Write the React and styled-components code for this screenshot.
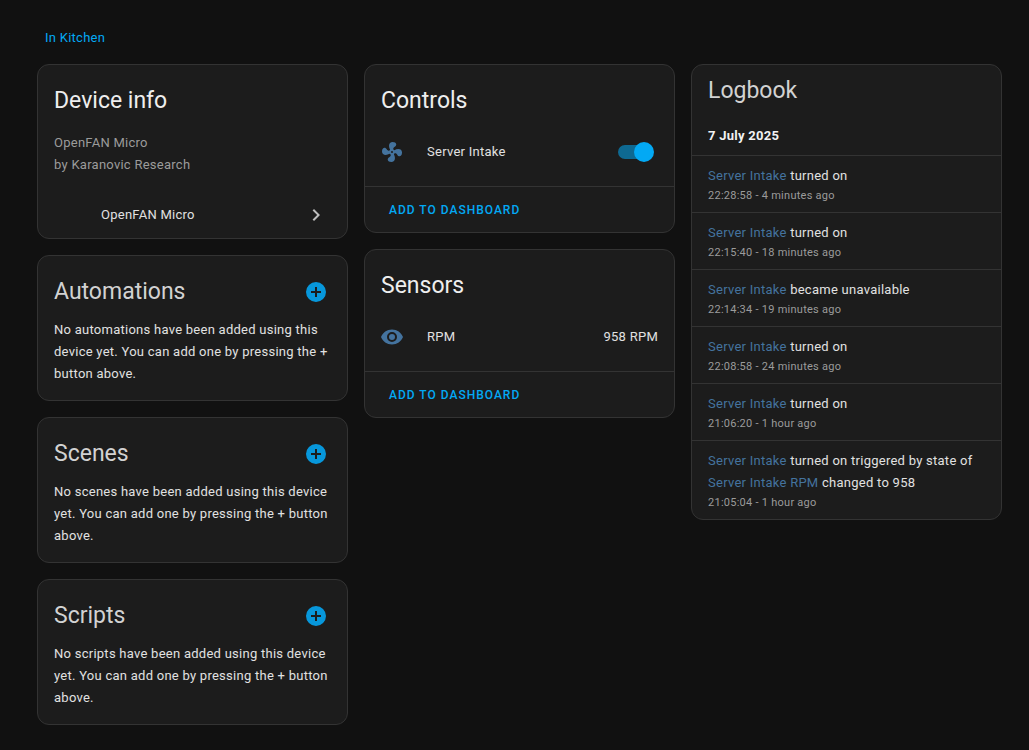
import React, { useState } from "react";
import styled, { createGlobalStyle } from "styled-components";

const GlobalStyle = createGlobalStyle`
  *, *::before, *::after { box-sizing: border-box; }
  body {
    margin: 0;
    background: #111111;
    color: #e1e1e1;
    font-family: Roboto, "Noto Sans", sans-serif;
    font-size: 13px;
    line-height: 22px;
    letter-spacing: 0.02em;
  }
`;

const Page = styled.main`
  padding: 27px 27px 24px 37px;
`;

const AreaLink = styled.a`
  display: block;
  width: fit-content;
  margin: 0 0 15px 8px;
  color: #03a9f4;
  text-decoration: none;
`;

const Columns = styled.div`
  display: grid;
  grid-template-columns: repeat(3, minmax(0, 1fr));
  align-items: start;
  gap: 16px;
`;

const Column = styled.div`
  display: flex;
  flex-direction: column;
  gap: 16px;
`;

const Card = styled.section`
  background: #1c1c1c;
  border: 1px solid #333333;
  border-radius: 12px;
  overflow: hidden;
`;

const CardHeader = styled.header`
  display: flex;
  align-items: center;
  justify-content: space-between;
  padding: ${(p) => (p.$compact ? "2px" : "12px")} 16px 0;
`;

const Title = styled.h1`
  margin: 0;
  font-size: 23px;
  font-weight: 400;
  line-height: 48px;
  letter-spacing: 0;
  color: ${(p) => (p.$soft ? "#d2d2d2" : "#eeeeee")};
`;

const AddButton = styled.button`
  display: flex;
  margin-right: 3px;
  padding: 0;
  border: 0;
  background: none;
  color: #0797db;
  cursor: pointer;
`;

const EmptyText = styled.p`
  margin: 0;
  padding: 3px 16px 15px;
`;

const DeviceMeta = styled.div`
  padding: 7px 16px 16px;
  color: #9b9b9b;
`;

const DeviceLink = styled.a`
  display: flex;
  align-items: center;
  justify-content: space-between;
  height: 46px;
  padding: 0 19px 0 63px;
  color: #e1e1e1;
  text-decoration: none;

  svg { color: #bdbdbd; }
`;

const EntityRow = styled.div`
  display: flex;
  align-items: center;
  height: 42px;
  margin: 6px 16px 13px;
`;

const EntityIcon = styled.span`
  display: flex;
  width: 47px;
  margin-left: -1px;
  color: #44739e;
`;

const EntityName = styled.label`
  flex: 1;
`;

const CardActions = styled.footer`
  display: flex;
  align-items: center;
  height: 46px;
  padding: 0 16px;
  border-top: 1px solid #333333;
`;

const TextButton = styled.button`
  padding: 0 8px;
  border: 0;
  background: none;
  color: #03a9f4;
  font: 500 12px/32px Roboto, sans-serif;
  letter-spacing: 1px;
  text-transform: uppercase;
  cursor: pointer;
`;

const Switch = styled.input`
  appearance: none;
  position: relative;
  width: 36px;
  height: 20px;
  margin: 0 4px 0 0;
  cursor: pointer;

  &::before {
    content: "";
    position: absolute;
    inset: 3px 1px 3px 0;
    border-radius: 7px;
    background: #9b9b9b;
    opacity: 0.55;
  }
  &::after {
    content: "";
    position: absolute;
    top: 0;
    left: 0;
    width: 20px;
    height: 20px;
    border-radius: 50%;
    background: #9b9b9b;
  }
  &:checked::before, &:checked::after { background: #03a9f4; }
  &:checked::after { left: 16px; }
`;

const LogDate = styled.h2`
  margin: 0;
  padding: 10px 16px 8px;
  color: #f2f2f2;
  font-size: 13px;
  font-weight: 700;
  line-height: 22px;
`;

const LogList = styled.ul`
  margin: 0;
  padding: 0;
  list-style: none;
`;

const LogEntry = styled.li`
  padding: 9px 16px 8px;
  border-top: 1px solid #333333;
`;

const EntityLink = styled.a`
  color: #44739e;
  text-decoration: none;
`;

const LogTime = styled.div`
  color: #9b9b9b;
  font-size: 11px;
  line-height: 17px;
`;

const paths = {
  fan: "M12,11A1,1 0 0,0 11,12A1,1 0 0,0 12,13A1,1 0 0,0 13,12A1,1 0 0,0 12,11M12.5,2C17,2 17.11,5.57 14.75,6.75C13.76,7.24 13.32,8.29 13.13,9.22C13.61,9.42 14.03,9.73 14.35,10.13C18.05,8.13 22.03,8.92 22.03,12.5C22.03,17 18.46,17.1 17.28,14.73C16.78,13.74 15.72,13.3 14.79,13.11C14.59,13.59 14.28,14 13.88,14.34C15.87,18.03 15.08,22 11.5,22C7,22 6.91,18.42 9.27,17.24C10.25,16.75 10.69,15.71 10.89,14.79C10.4,14.59 9.97,14.27 9.65,13.87C5.96,15.85 2,15.07 2,11.5C2,7 5.56,6.89 6.74,9.26C7.24,10.25 8.29,10.68 9.22,10.87C9.41,10.39 9.73,9.97 10.14,9.65C8.15,5.96 8.94,2 12.5,2Z",
  eye: "M12,9A3,3 0 0,0 9,12A3,3 0 0,0 12,15A3,3 0 0,0 15,12A3,3 0 0,0 12,9M12,17A5,5 0 0,1 7,12A5,5 0 0,1 12,7A5,5 0 0,1 17,12A5,5 0 0,1 12,17M12,4.5C7,4.5 2.73,7.61 1,12C2.73,16.39 7,19.5 12,19.5C17,19.5 21.27,16.39 23,12C21.27,7.61 17,4.5 12,4.5Z",
  plusCircle: "M17,13H13V17H11V13H7V11H11V7H13V11H17M12,2A10,10 0 0,0 2,12A10,10 0 0,0 12,22A10,10 0 0,0 22,12A10,10 0 0,0 12,2Z",
  chevron: "M8.59,16.58L13.17,12L8.59,7.41L10,6L16,12L10,18L8.59,16.58Z",
};

function Icon({ name }) {
  return (
    <svg width="24" height="24" viewBox="0 0 24 24" fill="currentColor" aria-hidden="true">
      <path d={paths[name]} />
    </svg>
  );
}

const related = [
  { title: "Automations", text: "No automations have been added using this device yet. You can add one by pressing the + button above." },
  { title: "Scenes", text: "No scenes have been added using this device yet. You can add one by pressing the + button above." },
  { title: "Scripts", text: "No scripts have been added using this device yet. You can add one by pressing the + button above." },
];

const log = [
  { text: "turned on", time: "22:28:58 - 4 minutes ago" },
  { text: "turned on", time: "22:15:40 - 18 minutes ago" },
  { text: "became unavailable", time: "22:14:34 - 19 minutes ago" },
  { text: "turned on", time: "22:08:58 - 24 minutes ago" },
  { text: "turned on", time: "21:06:20 - 1 hour ago" },
  { text: "turned on triggered by state of", source: "Server Intake RPM", change: "changed to 958", time: "21:05:04 - 1 hour ago" },
];

export default function App() {
  const [on, setOn] = useState(true);
  return (
    <>
      <GlobalStyle />
      <Page>
        <AreaLink href="#kitchen">In Kitchen</AreaLink>
        <Columns>
          <Column>
            <Card>
              <CardHeader><Title>Device info</Title></CardHeader>
              <DeviceMeta>
                <div>OpenFAN Micro</div>
                <div>by Karanovic Research</div>
              </DeviceMeta>
              <DeviceLink href="#device">
                OpenFAN Micro
                <Icon name="chevron" />
              </DeviceLink>
            </Card>
            {related.map((item) => (
              <Card key={item.title}>
                <CardHeader>
                  <Title $soft>{item.title}</Title>
                  <AddButton type="button" aria-label={`Add ${item.title}`}>
                    <Icon name="plusCircle" />
                  </AddButton>
                </CardHeader>
                <EmptyText>{item.text}</EmptyText>
              </Card>
            ))}
          </Column>

          <Column>
            <Card>
              <CardHeader><Title>Controls</Title></CardHeader>
              <EntityRow>
                <EntityIcon><Icon name="fan" /></EntityIcon>
                <EntityName htmlFor="intake">Server Intake</EntityName>
                <Switch id="intake" type="checkbox" role="switch" checked={on} onChange={() => setOn(!on)} />
              </EntityRow>
              <CardActions><TextButton type="button">Add to dashboard</TextButton></CardActions>
            </Card>
            <Card>
              <CardHeader><Title>Sensors</Title></CardHeader>
              <EntityRow>
                <EntityIcon><Icon name="eye" /></EntityIcon>
                <EntityName htmlFor="rpm">RPM</EntityName>
                <output id="rpm">958 RPM</output>
              </EntityRow>
              <CardActions><TextButton type="button">Add to dashboard</TextButton></CardActions>
            </Card>
          </Column>

          <Card>
            <CardHeader $compact><Title $soft>Logbook</Title></CardHeader>
            <LogDate>7 July 2025</LogDate>
            <LogList>
              {log.map((entry) => (
                <LogEntry key={entry.time}>
                  <div>
                    <EntityLink href="#intake">Server Intake</EntityLink> {entry.text}
                    {entry.source && (
                      <> <EntityLink href="#rpm">{entry.source}</EntityLink> {entry.change}</>
                    )}
                  </div>
                  <LogTime>{entry.time}</LogTime>
                </LogEntry>
              ))}
            </LogList>
          </Card>
        </Columns>
      </Page>
    </>
  );
}
